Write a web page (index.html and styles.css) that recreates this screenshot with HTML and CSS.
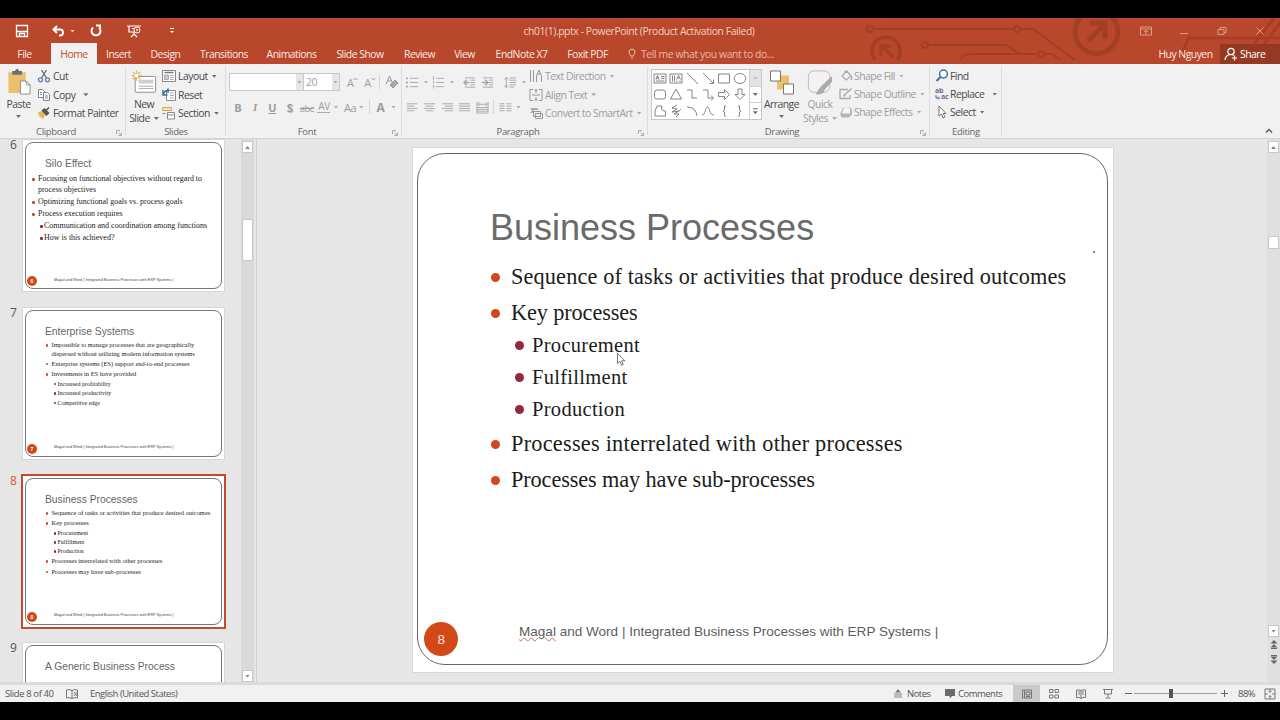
FILE: index.html
```html
<!DOCTYPE html>
<html lang="en">
<head>
    <meta charset="UTF-8">
    <meta name="viewport" content="width=device-width, initial-scale=1.0">
    <title>ch01(1).pptx - PowerPoint</title>
    <link rel="stylesheet" href="styles.css">
</head>
<body>
    <div class="app">
        <!-- Title bar and tabs -->
        <header class="titlebar">
            <svg class="circuit" viewBox="860 18 420 46" fill="none" stroke="#a33f26" stroke-width="2">
                <circle cx="870" cy="29" r="3"/><path d="M873 29h141M1020 29h13l42 31"/><circle cx="1017" cy="29" r="3"/>
                <circle cx="925" cy="45" r="3"/><path d="M928 45h78l14 9M960 60q4-6 10-6h68M1044 54h8l8 6"/><circle cx="1041" cy="54" r="3"/>
                <path d="M875 60a14 14 0 1 1 22 0" stroke-width="3.5"/><path d="M893 57l-10-10M881 56v-10h10" stroke-width="3.5"/>
                <circle cx="1096.500" cy="32" r="21.500" stroke-width="5"/><path d="M1088 41l17-17M1090 23h15v16" stroke-width="5"/>
                <path d="M1178 60l11-22h91M1242 60l32-42M1252 60l32-42" stroke-width="2.500"/>
            </svg>
            <div class="title-row">
                <div class="quick-access">
                    <svg class="qa-icon" viewBox="0 0 14 14"><path d="M1.500 1.500h11v11h-11zM1.500 7.500h11M4.500 12.500v-3h5v3" fill="none" stroke="#fff" stroke-width="1.300"/></svg>
                    <svg class="qa-icon undo" viewBox="0 0 14 14"><path d="M3 5.500h6a3 3 0 0 1 0 6H8M6 2L2.500 5.500L6 9" fill="none" stroke="#fff" stroke-width="2"/></svg>
                    <i class="caret"></i>
                    <svg class="qa-icon redo" viewBox="0 0 14 14"><path d="M4 3.500a4.500 4.500 0 1 0 6 0M7 1.500h4v4" fill="none" stroke="#fff" stroke-width="1.900"/></svg>
                    <svg class="qa-icon show" viewBox="0 0 14 14"><path d="M0 2h14M2 2v6h5M5 4.500h3M7 8v3M4 13l3-3l3 3" fill="none" stroke="#fff" stroke-width="1.200"/><circle cx="10" cy="6" r="3" fill="none" stroke="#fff"/><path d="M9.300 4.500l2 1.500l-2 1.500z" fill="#fff"/></svg>
                    <svg class="qa-more" viewBox="0 0 6 6"><path d="M1 .5h4" stroke="#fff"/><path d="M1 3h4L3 5z" fill="#fff"/></svg>
                </div>
                <div class="doc-title">ch01(1).pptx - PowerPoint (Product Activation Failed)</div>
                <div class="window-buttons">
                    <svg viewBox="0 0 12 12"><path d="M.5 2h11v8H.5zM.5 4h11M6 9V5.500M4 7l2-2l2 2"/></svg>
                    <svg viewBox="0 0 12 12"><path d="M2 8.500h8"/></svg>
                    <svg viewBox="0 0 12 12"><path d="M2 4.500h6v5H2zM4 4.500v-2h6v5H8"/></svg>
                    <svg viewBox="0 0 12 12"><path d="M2.500 2.500l7 7M9.500 2.500l-7 7"/></svg>
                </div>
            </div>
            <nav class="tabs">
                <span>File</span>
                <span class="active">Home</span>
                <span>Insert</span>
                <span>Design</span>
                <span>Transitions</span>
                <span>Animations</span>
                <span>Slide Show</span>
                <span>Review</span>
                <span>View</span>
                <span>EndNote X7</span>
                <span>Foxit PDF</span>
                <div class="tell-me">
                    <svg viewBox="0 0 8 12"><path d="M2.500 8C2.500 6.500 1 5.800 1 4a3 3 0 0 1 6 0C7 5.800 5.500 6.500 5.500 8zM2.700 10h2.600" fill="none" stroke="#e9b9aa"/></svg>
                    Tell me what you want to do...
                </div>
                <div class="user">Huy Nguyen</div>
                <div class="share">
                    <svg viewBox="0 0 14 14"><circle cx="7" cy="4.500" r="3.200"/><path d="M1 13c0-3 2-4.500 4.500-5.500M8.500 7.500l1 1M10.500 8.500v5M8 11h5"/></svg>
                    Share
                </div>
            </nav>
        </header>

        <!-- Ribbon -->
        <div class="ribbon">
            <section class="group clipboard">
                <div class="group-body">
                    <div class="big-button paste">
                        <svg viewBox="0 0 26 28"><rect x="2" y="3" width="18" height="22" rx="1" fill="#ebc06c"/><path d="M6 2h3a2 2 0 0 1 4 0h3v4H6z" fill="#6d6d6d"/><path d="M14.500 12.500h6l4 4v9.500h-10z" fill="#fff" stroke="#8a8a8a"/><path d="M20.500 12.500v4h4" fill="none" stroke="#8a8a8a"/></svg>
                        <span>Paste</span>
                        <i class="caret"></i>
                    </div>
                    <div class="tool-list">
                        <div class="tool"><svg viewBox="0 0 14 14"><path d="M4.500 1l5 8M9.500 1l-5 8" stroke="#666" stroke-width="1.300"/><g fill="none" stroke="#5b7fae" stroke-width="1.300"><circle cx="3.500" cy="10.800" r="2"/><circle cx="10.500" cy="10.800" r="2"/></g></svg>Cut</div>
                        <div class="tool"><svg viewBox="0 0 14 14" fill="#fff" stroke="#7b8794"><path d="M1.500 1.500h4l2 2v6h-6z"/><path d="M6.500 4.500h4l2 2v6h-6z"/><path d="M3 4.500h2M3 6.500h2M8 8h3M8 10h3"/></svg>Copy<i class="caret wide"></i></div>
                        <div class="tool"><svg viewBox="0 0 14 14"><path d="M1 6l5-1l3 3l-3 5L2 10z" fill="#ebb55c"/><path d="M5.500 4.500l4 4.500l2-2l-4-4zM9 4.500l3-3" fill="#555" stroke="#555" stroke-width="1.500"/></svg>Format Painter</div>
                    </div>
                </div>
                <div class="group-label">Clipboard<svg class="launcher" viewBox="0 0 6 6"><path d="M.5 4V.5H4M2.500 2.500L5 5M5.500 2.500v3h-3"/></svg></div>
            </section>

            <section class="group slides">
                <div class="group-body">
                    <div class="big-button new-slide">
                        <svg viewBox="0 0 28 26"><rect x="4.500" y="6.500" width="22" height="17" rx="1" fill="#fff" stroke="#888"/><path d="M8 10h16v4H8z" fill="#cfcfcf"/><path d="M8 17h16M8 19.500h16" stroke="#aaa"/><path d="M6 0v11M.5 5.500h11M2 1.500l8 8M10 1.500l-8 8" stroke="#e8b257" stroke-width="1.300"/><circle cx="6" cy="5.500" r="2" fill="#fff"/></svg>
                        <span>New</span>
                        <span>Slide<i class="caret"></i></span>
                    </div>
                    <div class="tool-list">
                        <div class="tool"><svg viewBox="0 0 14 14"><path d="M.5 1.500h13v11H.5z" fill="#fff" stroke="#888"/><path d="M2.500 3.500h9" stroke="#777" stroke-width="1.500"/><path d="M2.500 6h4v4.500h-4zM8 6.500h3.500M8 8.500h3.500M8 10.500h3.500" fill="#ccc" stroke="#aaa"/></svg>Layout<i class="caret"></i></div>
                        <div class="tool"><svg viewBox="0 0 14 14"><path d="M4.500 2.500h9v10h-9z" fill="#fff" stroke="#888"/><path d="M8 5h4M8 7.500h4M8 10h4" stroke="#aaa"/><path d="M1.500 6.500C1.500 3 4 2.500 7 2.500M6 .5V5M1 2v5h4.500" fill="none" stroke="#41719c" stroke-width="1.500"/></svg>Reset</div>
                        <div class="tool"><svg viewBox="0 0 14 14"><path d="M.5 1.500h9v3h-9z" fill="#f6e2c6" stroke="#e0a050"/><path d="M5.500 6.500h7v6.500h-7zM5.500 9h7M.5 7.500h3" fill="#fff" stroke="#888"/></svg>Section<i class="caret"></i></div>
                    </div>
                </div>
                <div class="group-label">Slides</div>
            </section>

            <section class="group font disabled">
                <div class="group-body stacked">
                    <div class="icon-row first">
                        <div class="combo font-name"><i class="caret"></i></div>
                        <div class="combo font-size">20<i class="caret"></i></div>
                        <span class="slot grow">A<svg viewBox="0 0 5 4"><path d="M.5 3l2-2l2 2"/></svg></span>
                        <span class="slot">A<svg viewBox="0 0 5 4"><path d="M.5 1l2 2l2-2"/></svg></span>
                        <i class="sep"></i>
                        <span class="slot clear"><svg viewBox="0 0 14 14"><path d="M1 9l3.500-8L8 9M2.500 6h4" fill="none" stroke="#999"/><path d="M5 10l5-5l3 3l-5 5z" fill="#aaa"/></svg></span>
                    </div>
                    <div class="icon-row second">
                        <span class="slot"><b>B</b></span>
                        <span class="slot serif"><b><i>I</i></b></span>
                        <span class="slot"><b><u>U</u></b></span>
                        <span class="slot shadow"><b>S</b></span>
                        <span class="slot"><s>abc</s></span>
                        <span class="slot spacing">AV</span><i class="caret"></i>
                        <span class="slot case">Aa</span><i class="caret"></i>
                        <i class="sep"></i>
                        <span class="slot color"><b>A</b></span><i class="caret"></i>
                    </div>
                </div>
                <div class="group-label">Font<svg class="launcher" viewBox="0 0 6 6"><path d="M.5 4V.5H4M2.500 2.500L5 5M5.500 2.500v3h-3"/></svg></div>
            </section>

            <section class="group paragraph disabled">
                <div class="group-body">
                    <div class="para-icons">
                        <div class="icon-row first">
                            <svg class="ic" viewBox="0 0 14 14"><path d="M4 2.500h9M4 7h9M4 11.500h9"/><path d="M0 2.500h2M0 7h2M0 11.500h2" stroke-width="2"/></svg><i class="caret"></i>
                            <svg class="ic" viewBox="0 0 14 14"><path d="M4.500 2.500H13M4.500 7H13M4.500 11.500H13M1.500 0v4M1 5.500h1v3M.5 10.500h1.500v3"/></svg><i class="caret"></i>
                            <i class="sep"></i>
                            <svg class="ic" viewBox="0 0 14 14"><path d="M2 2h11M8 4.500h5M8 7h5M8 9.500h5M2 12h11"/><path d="M7 7H1.500M4 4L1 7l3 3" stroke-width="1.600"/></svg>
                            <svg class="ic indent" viewBox="0 0 14 14"><path d="M2 2h11M8.500 4.500H13M8.500 7H13M8.500 9.500H13M2 12h11"/><path d="M1 7h6M4.500 4l3 3l-3 3" stroke-width="1.600"/></svg>
                            <i class="sep"></i>
                            <svg class="ic" viewBox="0 0 14 14"><path d="M6 2h7M6 4.500h7M6 7h7M6 9.500h7M6 12h5M2.500 1.500v11M.5 4l2-2.500l2 2.500M.5 10l2 2.500l2-2.500"/></svg><i class="caret"></i>
                        </div>
                        <div class="icon-row second">
                            <svg class="ic al" viewBox="0 0 14 14"><path d="M1 3h11M1 5.500h8M1 8h11M1 10.500h8"/></svg>
                            <svg class="ic al" viewBox="0 0 14 14"><path d="M1 3h12M3 5.500h8M1 8h12M3 10.500h8"/></svg>
                            <svg class="ic al" viewBox="0 0 14 14"><path d="M1 3h12M4 5.500h9M1 8h12M4 10.500h9"/></svg>
                            <svg class="ic al" viewBox="0 0 14 14"><path d="M1 3h12M1 5.500h12M1 8h12M1 10.500h12"/></svg>
                            <svg class="ic al" viewBox="0 0 14 14"><path d="M1 1v12M13 1v12M2 3.500h10M4 1.500l-2 2l2 2M10 1.500l2 2l-2 2M1 7h12M1 9h12M1 11h12M1 13h12"/></svg>
                            <i class="sep"></i>
                            <svg class="ic" viewBox="0 0 14 14"><path d="M.5 3H6M8 3h5.500M.5 5.500H6M8 5.500h5.500M.5 8H6M8 8h5.500M.5 10.500H6M8 10.500h5.500"/></svg><i class="caret"></i>
                        </div>
                    </div>
                    <div class="tool-list">
                        <div class="tool"><svg viewBox="0 0 14 14"><path d="M1.500 1v12M4.500 1v12M7.500 7v6M12.500 7v6M7.500 7l2.500-6l2.500 6M8.500 5h3" fill="none" stroke="#999"/></svg>Text Direction<i class="caret"></i></div>
                        <div class="tool"><svg viewBox="0 0 14 14"><path d="M4 1.500H1v11h3M10 1.500h3v11h-3M3 7h8M7 1v4M5.500 3L7 1.500L8.500 3M7 9v4M5.500 11L7 12.500L8.500 11" fill="none" stroke="#999"/></svg>Align Text<i class="caret"></i></div>
                        <div class="tool"><svg viewBox="0 0 14 14"><path d="M1 2h7l2 2H5v3H1l2-2.500z" fill="#aaa"/><path d="M4.500 5.500h7v5h-7zM6.500 7.500h7v5h-7z" fill="#eee" stroke="#999"/></svg>Convert to SmartArt<i class="caret"></i></div>
                    </div>
                </div>
                <div class="group-label">Paragraph<svg class="launcher" viewBox="0 0 6 6"><path d="M.5 4V.5H4M2.500 2.500L5 5M5.500 2.500v3h-3"/></svg></div>
            </section>

            <section class="group drawing">
                <div class="group-body">
                    <div class="gallery">
                        <div class="shapes">
                            <svg viewBox="0 0 16 16"><path d="M2 4h12v9H2zM9 6.500h3.500M9 8.500h3.500M4 11h8.500"/><path d="M4 9.500l1.500-4L7 9.500M4.500 8h2" stroke-width="1"/></svg>
                            <svg viewBox="0 0 16 16"><path d="M2 4h12v9H2zM4.500 5.500v6M6.500 5.500v6M9 10.500v1.500M12 10.500v1.500"/><path d="M8.500 9.500l2-4l2 4M9.500 8h2"/></svg>
                            <svg viewBox="0 0 16 16"><path d="M3 3l11 11"/></svg>
                            <svg viewBox="0 0 16 16"><path d="M3 3l10 10M13.500 9.500v4h-4"/></svg>
                            <svg viewBox="0 0 16 16"><path d="M2.500 4h11v9h-11z"/></svg>
                            <svg viewBox="0 0 16 16"><ellipse cx="8" cy="8.500" rx="5.800" ry="5"/></svg>
                            <svg viewBox="0 0 16 16"><rect x="2.500" y="4" width="11" height="9" rx="2.500"/></svg>
                            <svg viewBox="0 0 16 16"><path d="M8 3l5.500 10h-11z"/></svg>
                            <svg viewBox="0 0 16 16"><path d="M3 4h5v8h5"/></svg>
                            <svg viewBox="0 0 16 16"><path d="M3 4h5v8h5M11 9.500l2.500 2.500l-2.500 2.500"/></svg>
                            <svg viewBox="0 0 16 16"><path d="M2.500 6.500h6V3.500l5 5l-5 5v-3h-6z"/></svg>
                            <svg viewBox="0 0 16 16"><path d="M6 3h4v5.500h3l-5 5l-5-5h3z"/></svg>
                            <svg viewBox="0 0 16 16"><path d="M5 3h5q-2 5 3.500 5v5H3V8z"/></svg>
                            <svg viewBox="0 0 16 16"><path d="M9 2L4 5l5 1l-5 3l7-1l-5 3l5 0l-3 3M11 8l2-2"/></svg>
                            <svg viewBox="0 0 16 16"><path d="M3 4q9 0 10 9"/></svg>
                            <svg viewBox="0 0 16 16"><path d="M2 12C6 12 5 4 7.500 4S9 12 14 12"/></svg>
                            <svg viewBox="0 0 16 16"><path d="M10 3H8.500v4L7 8l1.500 1v4H10"/></svg>
                            <svg viewBox="0 0 16 16"><path d="M6 3h1.500v4L9 8L7.500 9v4H6"/></svg>
                        </div>
                        <div class="gallery-scroll">
                            <span class="off"><i class="caret up"></i></span>
                            <span><i class="caret"></i></span>
                            <span><i class="caret bar"></i></span>
                        </div>
                    </div>
                    <div class="big-button arrange">
                        <svg viewBox="0 0 26 26"><path d="M8 6h12v14H8z" fill="#ebc06c"/><path d="M1.500 1.500h10v10h-10zM14.500 14.500h10v10h-10z" fill="#fff" stroke="#777"/></svg>
                        <span>Arrange</span>
                        <i class="caret"></i>
                    </div>
                    <div class="big-button quick-styles disabled">
                        <svg viewBox="0 0 28 28"><rect x="1.500" y="1.500" width="23" height="23" rx="6" fill="#f5f0f4" stroke="#b9b4b8"/><path d="M27 7v6l-9 10l-4-4z" fill="#aaa"/><path d="M9 26c3 0 2-6 6-6l4 3c-2 4-7 5-10 3z" fill="#aaa"/></svg>
                        <span>Quick</span>
                        <span>Styles<i class="caret"></i></span>
                    </div>
                    <div class="tool-list tight disabled">
                        <div class="tool"><svg viewBox="0 0 14 14"><path d="M3 7l5-5l4 5l-5 4zM6 5V1.500M12 7q1.500 2 0 4" fill="none" stroke="#aaa" stroke-width="1.300"/></svg>Shape Fill<i class="caret"></i></div>
                        <div class="tool"><svg viewBox="0 0 14 14"><path d="M9 2.500H1v9h10V8M5 8.500l7.500-7" fill="none" stroke="#aaa" stroke-width="1.300"/><path d="M4 10l1-3l2 2z" fill="#aaa"/></svg>Shape Outline<i class="caret"></i></div>
                        <div class="tool"><svg viewBox="0 0 14 14"><path d="M4 2.500h7l2 2v5l-3 3H3l-2-3z" fill="#b5b5b5"/><path d="M5 2.500h5l1 1v5H3z" fill="#f4f4f4"/></svg>Shape Effects<i class="caret"></i></div>
                    </div>
                </div>
                <div class="group-label">Drawing<svg class="launcher" viewBox="0 0 6 6"><path d="M.5 4V.5H4M2.500 2.500L5 5M5.500 2.500v3h-3"/></svg></div>
            </section>

            <section class="group editing">
                <div class="group-body">
                    <div class="tool-list tight">
                        <div class="tool"><svg viewBox="0 0 14 14"><circle cx="8.500" cy="5" r="3.900" fill="#fff" stroke="#41719c" stroke-width="1.500"/><path d="M5.500 8L1.500 12" stroke="#41719c" stroke-width="2"/></svg>Find</div>
                        <div class="tool"><span class="ab-ac"><b>ab</b><b class="to"><svg viewBox="0 0 5 5"><path d="M1 0v3h3M3 1.500L4.500 3L3 4.500"/></svg>ac</b></span>Replace<i class="caret wide"></i></div>
                        <div class="tool"><svg viewBox="0 0 14 14"><path d="M4 1v10l2.500-2l1.500 4l2-1l-1.800-3.500H11z" fill="#fff" stroke="#777"/></svg>Select<i class="caret"></i></div>
                    </div>
                </div>
                <div class="group-label">Editing</div>
            </section>
            <svg class="collapse" viewBox="0 0 8 6"><path d="M1 4.500l3-3l3 3" fill="none" stroke="#555" stroke-width="1.400"/></svg>
        </div>

        <!-- Workspace -->
        <main class="workspace">
            <aside class="thumbs">
                <div class="thumb-item">
                    <span class="num">6</span>
                    <div class="thumb large-text">
                        <div class="frame">
                            <h3>Silo Effect</h3>
                            <ul>
                                <li>Focusing on functional objectives without regard to<br>process objectives</li>
                                <li>Optimizing functional goals vs. process goals</li>
                                <li>Process execution requires</li>
                                <li class="sub">Communication and coordination among functions</li>
                                <li class="sub">How is this achieved?</li>
                            </ul>
                            <b class="badge">6</b>
                            <p class="foot">Magal and Word | Integrated Business Processes with ERP Systems |</p>
                        </div>
                    </div>
                </div>
                <div class="thumb-item">
                    <span class="num">7</span>
                    <div class="thumb enterprise">
                        <div class="frame">
                            <h3>Enterprise Systems</h3>
                            <ul>
                                <li>Impossible to manage processes that are geographically<br>dispersed without utilizing modern information systems</li>
                                <li>Enterprise systems (ES) support end-to-end processes</li>
                                <li>Investments in ES have provided</li>
                                <li class="sub">Increased profitability</li>
                                <li class="sub">Increased productivity</li>
                                <li class="sub">Competitive edge</li>
                            </ul>
                            <b class="badge">7</b>
                            <p class="foot">Magal and Word | Integrated Business Processes with ERP Systems |</p>
                        </div>
                    </div>
                </div>
                <div class="thumb-item selected">
                    <span class="num">8</span>
                    <div class="thumb">
                        <div class="frame">
                            <h3>Business Processes</h3>
                            <ul>
                                <li>Sequence of tasks or activities that produce desired outcomes</li>
                                <li>Key processes</li>
                                <li class="sub">Procurement</li>
                                <li class="sub">Fulfillment</li>
                                <li class="sub">Production</li>
                                <li>Processes interrelated with other processes</li>
                                <li>Processes may have sub-processes</li>
                            </ul>
                            <b class="badge">8</b>
                            <p class="foot">Magal and Word | Integrated Business Processes with ERP Systems |</p>
                        </div>
                    </div>
                </div>
                <div class="thumb-item">
                    <span class="num">9</span>
                    <div class="thumb">
                        <div class="frame">
                            <h3>A Generic Business Process</h3>
                        </div>
                    </div>
                </div>
            </aside>
            <div class="scrollbar left">
                <span class="arrow"><i class="caret up"></i></span>
                <span class="handle"></span>
                <span class="arrow"><i class="caret"></i></span>
            </div>

            <div class="stage">
                <article class="slide">
                    <div class="slide-frame">
                        <h1>Business Processes</h1>
                        <ul>
                            <li>Sequence of tasks or activities that produce desired outcomes</li>
                            <li class="narrow">Key processes</li>
                            <li class="sub">Procurement</li>
                            <li class="sub">Fulfillment</li>
                            <li class="sub">Production</li>
                            <li class="wide">Processes interrelated with other processes</li>
                            <li class="narrow">Processes may have sub-processes</li>
                        </ul>
                        <div class="slide-number">8</div>
                        <p class="slide-footer"><span>Magal</span> and Word | Integrated Business Processes with ERP Systems |</p>
                        <i class="speck"></i>
                        <svg class="pointer" viewBox="0 0 9 13"><path d="M.5.5v10l2.400-2.200l1.700 4l1.600-.7L4.600 7.800H8z" fill="#fff" stroke="#555" stroke-width=".8"/></svg>
                    </div>
                </article>
            </div>
            <div class="scrollbar right">
                <span class="arrow"><i class="caret up"></i></span>
                <span class="handle"></span>
                <span class="arrow"><i class="caret"></i></span>
                <svg viewBox="0 0 10 10"><path d="M5 0L8.500 3.500h-7zM5 4l3.500 3.500h-7zM2 8h6v1H2z"/></svg>
                <svg viewBox="0 0 10 10"><path d="M5 10L8.500 6.500h-7zM5 6L8.500 2.500h-7zM2 1h6v1H2z"/></svg>
            </div>
        </main>

        <!-- Status bar -->
        <footer class="status">
            <span class="slide-count">Slide 8 of 40</span>
            <svg class="spell" viewBox="0 0 12 12"><path d="M6 2.500v8M6 2.500Q3 1 .5 2v8q3-1 5.500.5q2-1.500 5.500-.5V2q-3-1-5.500.5M8 4l3 4M11 4L8 8"/></svg>
            <span class="language">English (United States)</span>
            <svg class="notes-icon" viewBox="0 0 10 10"><path d="M1 4h8v5H1z" fill="#bbb"/><path d="M5 0l3 3.500H2z" fill="#777"/></svg>
            <span class="notes">Notes</span>
            <svg class="comments-icon" viewBox="0 0 10 10"><path d="M0 0h10v7H7L5 9.500L4.500 7H0z" fill="#6a6a6a"/></svg>
            <span class="comments">Comments</span>
            <span class="view active"><svg viewBox="0 0 12 12"><path d="M1.500 2h9v8h-9zM3.500 2v8M5 4h4v3H5zM5 8.500h4"/></svg></span>
            <span class="view"><svg viewBox="0 0 12 12"><path d="M1.500 1.500h3.500v3H1.500zM7 1.500h3.500v3H7zM1.500 7h3.500v3H1.500zM7 7h3.500v3H7z"/></svg></span>
            <span class="view"><svg viewBox="0 0 12 12"><path d="M6 2.500v8M6 2.500Q4 1.500 1.500 2v7.500q3-.5 4.500 1q1.500-1.500 4.500-1V2Q8 1.500 6 2.500M3 4h2M3 6h2M7 4h2M7 6h2"/></svg></span>
            <span class="view"><svg viewBox="0 0 12 12"><path d="M1 1.500h10M2.500 1.500v4.500h7V1.500M6 6v3M3.500 10h5"/></svg></span>
            <span class="zoom-sign minus"></span>
            <span class="zoom-track"><i></i></span>
            <span class="zoom-sign plus"></span>
            <span class="zoom-value">88%</span>
            <svg class="fit" viewBox="0 0 12 12"><path d="M1 1h10v10H1zM6 1v3M6 8v3M1 6h3M8 6h3M4.500 3L6 4.500L7.500 3M4.500 9L6 7.500L7.500 9"/></svg>
        </footer>
    </div>
</body>
</html>
```
FILE: styles.css
```css
* {
    margin: 0;
    padding: 0;
    box-sizing: border-box;
}
body {
    width: 1280px;
    height: 720px;
    overflow: hidden;
    background: #000;
    padding: 18px 0;
    font-family: "Open Sans", "Noto Sans", sans-serif;
    font-size: 10.4px;
    letter-spacing: -0.5px;
    color: #4a4a4a;
    white-space: nowrap;
}
svg {
    display: block;
    flex: none;
}
.app {
    height: 684px;
    display: flex;
    flex-direction: column;
    background: #e6e6e6;
}
.caret {
    display: inline-block;
    flex: none;
    width: 5px;
    height: 3px;
    background: currentColor;
    clip-path: polygon(0 0, 100% 0, 50% 100%);
    opacity: 0.8;
}
.caret.up {
    transform: rotate(180deg);
}
.caret.bar {
    height: 6px;
    clip-path: polygon(0 0, 100% 0, 100% 17%, 0 17%, 0 50%, 100% 50%, 50% 100%, 0 50%);
}

/* title bar */
.titlebar {
    position: relative;
    height: 46px;
    background: #b8472b;
    color: #fbe9e4;
}
.circuit {
    position: absolute;
    left: 860px;
    top: 0;
    width: 420px;
    height: 46px;
}
.title-row {
    position: relative;
    height: 26px;
    display: grid;
    grid-template-columns: 320px 638px 1fr;
    align-items: center;
}
.quick-access {
    display: flex;
    align-items: center;
    padding-left: 15px;
}
.qa-icon {
    width: 14px;
    height: 14px;
}
.undo {
    margin: 0 5px 0 22px;
}
.redo {
    margin-left: 14px;
}
.show {
    margin-left: 24px;
}
.qa-more {
    width: 6px;
    height: 6px;
    margin-left: 28px;
}
.doc-title {
    text-align: center;
    letter-spacing: -0.42px;
    color: #f4cfc4;
}
.window-buttons {
    display: flex;
    gap: 26px;
    padding-left: 182px;
}
.window-buttons svg {
    width: 12px;
    height: 12px;
    fill: none;
    stroke: #dc9a86;
}
.tabs {
    position: relative;
    height: 20px;
    line-height: 20px;
    display: grid;
    grid-template-columns: 49px 49px 41px 53px 64px 71px 66px 53px 37px 77px 55px 532px 73px 60px;
    text-align: center;
}
.tabs .active {
    margin: -1px 1px 0 2px;
    padding-top: 1px;
    background: #f1f1f1;
    color: #c0502f;
}
.tell-me {
    display: flex;
    align-items: center;
    gap: 5px;
    padding-left: 13px;
    color: #eab9aa;
    letter-spacing: -0.4px;
}
.tell-me svg {
    width: 8px;
    height: 12px;
}
.user {
    padding-left: 4px;
}
.share {
    display: flex;
    align-items: center;
    gap: 2px;
    padding-left: 4px;
    background: #953a22;
    color: #fff;
}
.share svg {
    width: 14px;
    height: 14px;
    fill: none;
    stroke: #fff;
    stroke-width: 1.2;
}

/* ribbon */
.ribbon {
    height: 75px;
    display: flex;
    background: #f1f1f1;
    border-bottom: 1px solid #d4d4d4;
    position: relative;
}
.group {
    display: flex;
    flex-direction: column;
    position: relative;
}
.group::after {
    content: "";
    position: absolute;
    right: 0;
    top: 3px;
    height: 68px;
    border-right: 1px solid #dcdcdc;
}
.group-body {
    height: 61px;
    display: flex;
}
.group-body.stacked {
    flex-direction: column;
}
.group-label {
    position: relative;
    line-height: 13px;
    font-size: 9.5px;
    letter-spacing: -0.35px;
    text-align: center;
    color: #666;
}
.launcher {
    position: absolute;
    right: 4px;
    top: 5px;
    width: 6px;
    height: 6px;
    fill: none;
    stroke: #aaa;
}
.disabled {
    color: #9d9d9d;
}
.clipboard {
    width: 126px;
}
.clipboard .group-label,
.font .group-label,
.paragraph .group-label,
.drawing .group-label {
    padding-right: 14px;
}
.slides {
    width: 100px;
}
.font {
    width: 176px;
}
.paragraph {
    width: 246px;
}
.drawing {
    width: 282px;
}
.editing {
    width: 72px;
}
.big-button {
    display: flex;
    flex-direction: column;
    align-items: center;
    line-height: 14px;
    padding-top: 5px;
}
.big-button svg {
    width: 26px;
    height: 27px;
    margin-bottom: 1px;
}
.big-button > .caret {
    margin-top: 4px;
}
.paste {
    width: 37px;
}
.new-slide {
    width: 36px;
}
.tool-list {
    padding-top: 3px;
}
.tool {
    height: 18.5px;
    display: flex;
    align-items: center;
}
.tool > svg {
    width: 14px;
    height: 14px;
    margin-right: 2px;
}
.tight .tool {
    height: 18px;
}
.tool .caret,
.big-button span .caret {
    margin-left: 4px;
}
.big-button span .caret {
    vertical-align: 2px;
}
.tool .caret.wide {
    margin-left: 8px;
}

/* font group */
.icon-row {
    display: flex;
    align-items: center;
    height: 20px;
}
.icon-row.first {
    margin-top: 8px;
}
.icon-row.second {
    margin-top: 5px;
}
.font .icon-row {
    padding-left: 3px;
}
.sep {
    width: 1px;
    height: 14px;
    background: #d4d4d4;
}
.combo {
    height: 18px;
    display: flex;
    align-items: center;
    justify-content: space-between;
    background: linear-gradient(to left, #e6e6e6 7px, #fff 7px);
    border: 1px solid #c8c8c8;
    padding: 0 1px 0 2px;
}
.font-name {
    width: 75px;
    justify-content: flex-end;
}
.font-size {
    width: 37px;
    margin-left: -1px;
}
.slot {
    width: 17.3px;
    text-align: center;
    font-size: 11px;
}
.first .slot {
    display: flex;
    justify-content: center;
}
.slot svg {
    width: 5px;
    height: 4px;
    margin-top: 2px;
    fill: none;
    stroke: #999;
}
.grow {
    margin-left: 4px;
}
.clear {
    margin-left: 4px;
}
.clear svg {
    width: 14px;
    height: 14px;
    margin: 0;
}
.serif {
    font-family: "Liberation Serif", serif;
}
.shadow {
    text-shadow: 1px 1px 1px #bbb;
}
.slot s {
    font-size: 9.5px;
}
.spacing {
    font-size: 10px;
    line-height: 11px;
    border-bottom: 1px solid #aaa;
    width: 13px;
    margin: 0 3px 0 2px;
}
.case {
    margin-left: 3px;
}
.font .second .sep {
    margin-left: 5px;
}
.color {
    margin: 0 2px;
    font-size: 12px;
}

/* paragraph group */
.para-icons {
    width: 127px;
}
.para-icons .icon-row {
    padding-left: 4px;
}
.ic {
    width: 13px;
    height: 13px;
    fill: none;
    stroke: #a8a8a8;
}
.first .ic + .caret {
    margin: 0 3.5px 0 4.5px;
}
.para-icons .first .sep {
    margin: 0 5px 0 0;
}
.indent {
    margin: 0 5px;
}
.al {
    margin-right: 4.4px;
}
.second .sep + .ic {
    margin: 0 4px 0 5px;
}

/* drawing group */
.gallery {
    width: 111px;
    height: 51px;
    margin: 5px 0 0 3px;
    display: flex;
    background: #fff;
    border: 1px solid #c6c6c6;
}
.shapes {
    display: grid;
    grid-template-columns: repeat(6, 16.1px);
    grid-auto-rows: 16.3px;
}
.shapes svg {
    width: 16px;
    height: 16px;
    fill: none;
    stroke: #777;
    stroke-width: 0.9;
}
.gallery-scroll {
    flex: 1;
    display: flex;
    flex-direction: column;
    border-left: 1px solid #d0d0d0;
}
.gallery-scroll span {
    flex: 1;
    display: flex;
    align-items: center;
    justify-content: center;
}
.gallery-scroll span + span {
    border-top: 1px solid #d0d0d0;
}
.gallery-scroll .off {
    background: #e3e3e3;
    color: #bbb;
}
.arrange {
    width: 39px;
}
.quick-styles {
    width: 38px;
}
.tool-list.tight .tool > svg {
    margin-right: 1px;
}
.editing .tool-list {
    padding-left: 5px;
}
.ab-ac {
    width: 15px;
    font-size: 7px;
    line-height: 6px;
    letter-spacing: -0.2px;
    color: #7c6690;
}
.ab-ac b {
    display: block;
}
.ab-ac .to {
    display: flex;
}
.ab-ac svg {
    width: 5px;
    height: 5px;
    margin: 1px 1px 0 0;
    fill: none;
    stroke: #41719c;
}
.collapse {
    position: absolute;
    right: 7px;
    bottom: 4px;
    width: 8px;
    height: 6px;
}

/* workspace */
.workspace {
    height: 546px;
    display: flex;
    border-bottom: 3px solid #dadada;
}
.thumbs {
    width: 241px;
    overflow: hidden;
}
.thumb-item {
    height: 151px;
    margin-bottom: 16.8px;
    display: flex;
}
.thumb-item:first-child {
    margin-top: 1px;
}
.num {
    width: 23px;
    padding-left: 10px;
    line-height: 10px;
    font-size: 12px;
    color: #555;
}
.selected .num {
    color: #d0593b;
}
.thumb {
    width: 201px;
    height: 151px;
    padding: 2px;
    background: #fff;
    outline: 1px solid #d6d6d6;
}
.selected .thumb {
    outline: 2px solid #c34a31;
}
.frame {
    position: relative;
    height: 147px;
    border: 1px solid #777;
    border-radius: 8px;
    color: #222;
    font-family: "Liberation Serif", serif;
    font-size: 6.48px;
    letter-spacing: 0;
}
.frame h3 {
    font-family: "Liberation Sans", sans-serif;
    font-size: 10.3px;
    line-height: 12px;
    font-weight: normal;
    color: #666;
    padding: 15px 0 0 19px;
}
.frame ul {
    list-style: none;
    padding: 3.5px 0 0 25.5px;
}
.frame li {
    position: relative;
    line-height: 8.2px;
    margin-bottom: 2.2px;
}
.frame li::before {
    content: "";
    position: absolute;
    left: -6px;
    top: 3px;
    width: 2.5px;
    height: 2.5px;
    border-radius: 50%;
    background: #d0491c;
}
.frame li.sub {
    margin-left: 6px;
    font-size: 6px;
    margin-bottom: 0.9px;
    top: -0.7px;
}
.frame li.sub::before {
    left: -4px;
    background: #8e2a34;
}
.large-text ul {
    padding: 4px 0 0 12px;
    font-size: 7.95px;
}
.large-text li {
    line-height: 10.7px;
    margin-bottom: 1.3px;
}
.large-text li:first-child {
    margin-bottom: 2px;
}
.large-text li.sub {
    font-size: 8px;
    margin-bottom: 1.3px;
    top: 0;
}
.large-text li::before {
    top: 4px;
}
.enterprise ul {
    font-size: 6.42px;
}
.enterprise li.sub {
    margin-bottom: 1.1px;
}
.badge {
    position: absolute;
    left: 1px;
    bottom: 2px;
    width: 10px;
    height: 10px;
    border-radius: 50%;
    background: #d34817;
    color: #fff;
    font: bold 5px/10px "Liberation Sans", sans-serif;
    text-align: center;
}
.foot {
    position: absolute;
    left: 28px;
    bottom: 6.5px;
    font: 3.87px/5px "Liberation Sans", sans-serif;
    color: #444;
}

.scrollbar {
    width: 13px;
    display: flex;
    flex-direction: column;
    align-items: center;
    background: #d9d9d9;
    color: #666;
}
.scrollbar span {
    width: 11px;
    background: #fff;
    border: 1px solid #c9c9c9;
}
.scrollbar .arrow {
    height: 12px;
    display: flex;
    align-items: center;
    justify-content: center;
}
.left {
    padding-top: 2px;
}
.left .handle {
    height: 42px;
    margin: 66px 0 auto;
}
.right {
    padding-top: 2px;
    background: #e0e0e0;
}
.right .handle {
    height: 13px;
    margin: 83px 0 376px;
}
.right svg {
    width: 10px;
    height: 10px;
    fill: #666;
    margin-top: 4px;
}
.right span + svg {
    margin-top: 3px;
}

/* main slide */
.stage {
    flex: 1;
    margin-left: 2px;
    border-left: 1px solid #cfcfcf;
    padding: 9px 0 0 156px;
}
.slide {
    width: 700px;
    height: 524px;
    padding: 5px 4px;
    background: #fff;
    outline: 1px solid #d8d8d8;
}
.slide-frame {
    position: relative;
    width: 691px;
    height: 512px;
    border: 1px solid #666;
    border-radius: 28px;
    padding: 53px 0 0 72px;
}
.slide h1 {
    font: 36px/42px "Liberation Sans", sans-serif;
    letter-spacing: 0;
    color: #6a6a6a;
}
.slide ul {
    list-style: none;
    padding: 10px 0 0 21px;
    font-family: "Liberation Serif", serif;
    color: #1c1c1c;
}
.slide ul li {
    position: relative;
    font-size: 22.3px;
    letter-spacing: 0.13px;
    line-height: 35.7px;
}
.slide ul li.narrow {
    letter-spacing: -0.12px;
}
.slide ul li.wide {
    letter-spacing: 0.24px;
}
.slide ul li::before {
    content: "";
    position: absolute;
    left: -20px;
    top: 14px;
    width: 9px;
    height: 9px;
    border-radius: 50%;
    background: #d0491c;
}
.slide ul li.sub {
    padding-left: 21px;
    font-size: 20.5px;
    letter-spacing: 0.3px;
    line-height: 31.8px;
}
.slide ul li.sub::before {
    left: 4px;
    top: 11px;
    background: #94293a;
}
.slide-number {
    position: absolute;
    left: 6px;
    bottom: 8px;
    width: 34px;
    height: 34px;
    border-radius: 50%;
    background: #d34817;
    color: #fbe3da;
    font: 13.5px/35px "Liberation Sans", sans-serif;
    text-align: center;
}
.slide-footer {
    position: absolute;
    left: 101px;
    bottom: 24px;
    font: 13.56px/16px "Liberation Sans", sans-serif;
    letter-spacing: 0;
    color: #5d5d5d;
}
.slide-footer span {
    text-decoration: underline wavy #d46a5e 0.7px;
    text-underline-offset: 1px;
}
.speck {
    position: absolute;
    left: 675px;
    top: 97px;
    width: 2px;
    height: 2px;
    background: #888;
}
.pointer {
    position: absolute;
    left: 199px;
    top: 199px;
    width: 9px;
    height: 13px;
}

/* status bar */
.status {
    height: 17px;
    display: flex;
    align-items: center;
    background: #f1f1f1;
    font-size: 9.5px;
    color: #555;
}
.status svg {
    width: 12px;
    height: 12px;
    fill: none;
    stroke: #777;
}
.slide-count {
    width: 62px;
    padding-left: 5px;
    letter-spacing: -0.4px;
}
.status .spell {
    margin: 0 12px 0 4px;
}
.language {
    width: 803px;
}
.status .notes-icon,
.status .comments-icon {
    width: 10px;
    height: 10px;
    stroke: none;
}
.notes {
    width: 42px;
    padding-left: 4px;
}
.comments {
    width: 58px;
    padding-left: 3px;
}
.view {
    width: 27px;
    height: 17px;
    display: flex;
    align-items: center;
    justify-content: center;
}
.view.active {
    background: #cacaca;
}
.zoom-sign {
    width: 7px;
    height: 7px;
    margin-left: 4px;
    background: linear-gradient(#666, #666) center / 7px 1px no-repeat;
}
.zoom-sign.plus {
    background: linear-gradient(#666, #666) center / 7px 1px no-repeat, linear-gradient(#666, #666) center / 1px 7px no-repeat;
}
.zoom-track {
    width: 83px;
    height: 1px;
    margin-left: 2px;
    background: #a0a0a0;
    display: flex;
    align-items: center;
}
.zoom-track i {
    width: 4px;
    height: 9px;
    flex: none;
    margin-left: 35px;
    background: #555;
}
.zoom-value {
    width: 26px;
    margin-left: 10px;
}
```
